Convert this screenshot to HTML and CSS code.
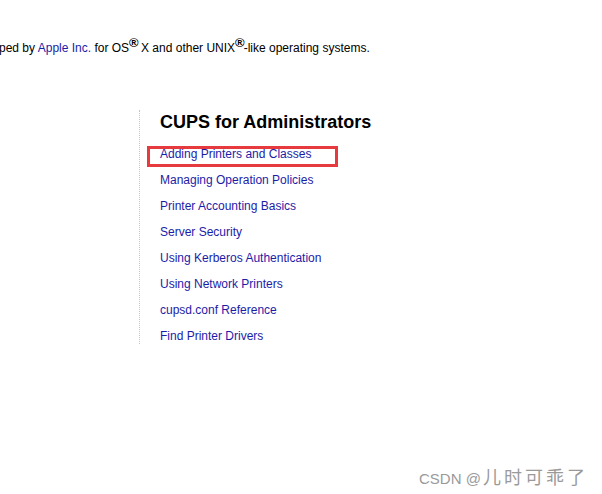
FILE: index.html
```html
<!DOCTYPE html>
<html lang="en">

<head>
  <meta charset="UTF-8">
  <meta name="viewport" content="width=device-width, initial-scale=1.0">
  <title>CUPS</title>
  <link rel="stylesheet" href="styles.css">
</head>

<body>
  <p class="intro">ped by <a href="#">Apple Inc.</a> for OS<sup>®</sup> X and other UNIX<sup>®</sup>-like operating systems.</p>

  <div class="admin">
    <h2>CUPS for Administrators</h2>
    <ul class="links">
      <li class="marked"><a href="#">Adding Printers and Classes</a></li>
      <li><a href="#">Managing Operation Policies</a></li>
      <li><a href="#">Printer Accounting Basics</a></li>
      <li><a href="#">Server Security</a></li>
      <li><a href="#">Using Kerberos Authentication</a></li>
      <li><a href="#">Using Network Printers</a></li>
      <li><a href="#">cupsd.conf Reference</a></li>
      <li><a href="#">Find Printer Drivers</a></li>
    </ul>
  </div>

  <div class="watermark">CSDN @<span class="cjk">儿时可乖了</span></div>
</body>

</html>
```

FILE: styles.css
```css
body {
  font-family: "Liberation Sans", Arial, sans-serif;
  font-size: 12px;
  margin: 0;
  color: #000;
  background-color: #ffffff;
}

a {
  color: #1c1ca8;
  text-decoration: none;
}

.intro {
  margin: 0 0 0 -1px;
  padding-top: 41px;
  line-height: 14px;
  white-space: nowrap;
}

.intro sup {
  font-size: 13px;
  font-weight: bold;
  line-height: 0;
  vertical-align: 5px;
  letter-spacing: -1px;
}

.admin {
  margin: 55px 0 0 139px;
  padding-left: 20px;
  border-left: 1px dotted #c4c4c4;
}

.admin h2 {
  margin: 0;
  padding-top: 1px;
  font-size: 18px;
  line-height: 22px;
  font-weight: bold;
}

.links {
  list-style: none;
  margin: 13px 0 0;
  padding: 0;
  display: flex;
  flex-direction: column;
  gap: 10px;
  line-height: 16px;
}

/* red highlight drawn over the first link */
.marked {
  position: relative;
}

.marked::after {
  content: "";
  position: absolute;
  left: -13px;
  top: 0;
  width: 191px;
  height: 21px;
  box-sizing: border-box;
  border: 3px solid #e63a3f;
}

.watermark {
  position: absolute;
  left: 419px;
  top: 466px;
  font-size: 15px;
  line-height: 20px;
  color: #9a9a9a;
  white-space: nowrap;
}

.watermark .cjk {
  font-family: "Noto Sans CJK SC", sans-serif;
  font-size: 18px;
  letter-spacing: 3px;
  margin-left: 2px;
}
```
